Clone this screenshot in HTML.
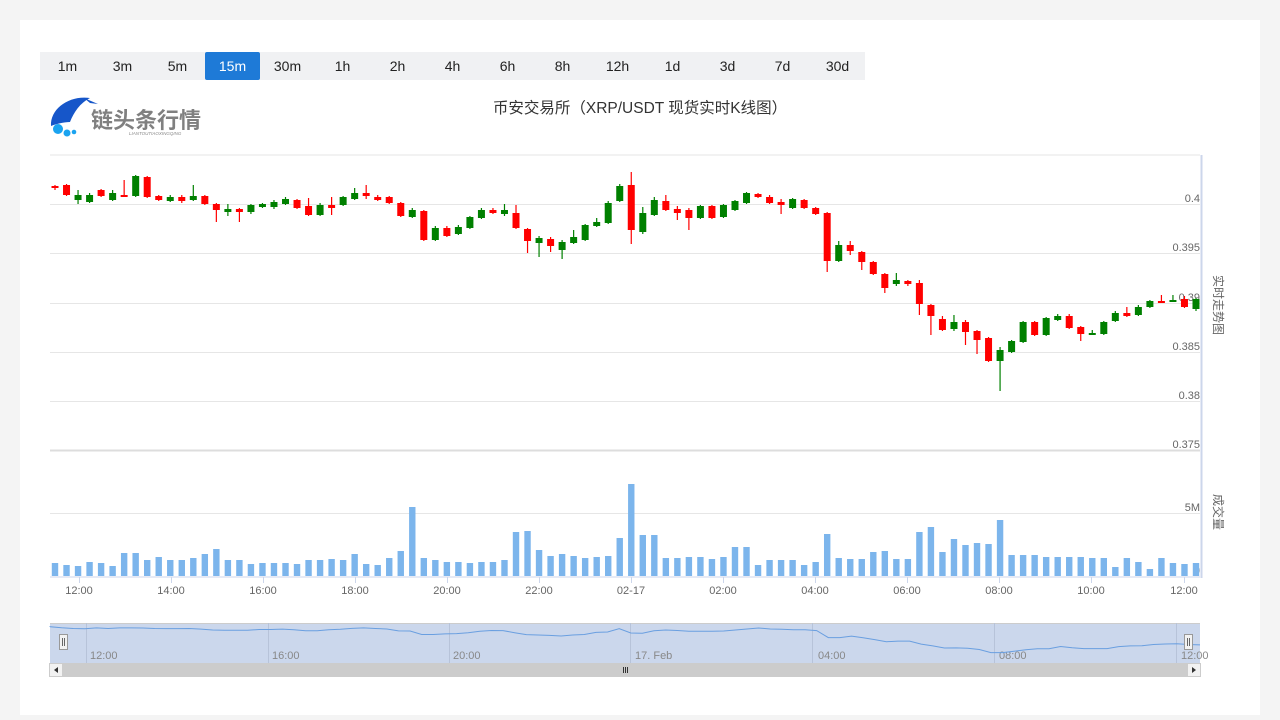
<!DOCTYPE html>
<html><head><meta charset="utf-8"><style>
body{margin:0;background:#f4f4f4;width:1280px;height:720px;overflow:hidden;font-family:"Liberation Sans","Noto Sans CJK SC",sans-serif}
.card{position:absolute;left:20px;top:20px;width:1240px;height:695px;background:#fff}
.tb{position:absolute;left:40px;top:52px;height:28px;display:flex;background:#f0f1f3}
.tb div{width:55px;height:28px;line-height:28px;text-align:center;font-size:14px;color:#222}
.tb .on{background:#1e7ad7;color:#fff;border-radius:2px}
svg{position:absolute;left:0;top:0}
</style></head><body>
<div class="card"></div>
<div class="tb"><div>1m</div><div>3m</div><div>5m</div><div class="on">15m</div><div>30m</div><div>1h</div><div>2h</div><div>4h</div><div>6h</div><div>8h</div><div>12h</div><div>1d</div><div>3d</div><div>7d</div><div>30d</div></div>
<svg id="s" width="1280" height="720" xmlns="http://www.w3.org/2000/svg" font-family="Liberation Sans, Noto Sans CJK SC, sans-serif">
<path d="M51 126 C50 108 70 95 90 98 C80 103 74 112 70 122 C64 122 56 124 51 126Z" fill="#1656c9"/>
<path d="M84 98 L98 104 L90 103Z" fill="#1656c9"/>
<circle cx="58" cy="129" r="5" fill="#1aa3f0"/><circle cx="67" cy="133" r="3.5" fill="#1aa3f0"/><circle cx="74" cy="132" r="2.3" fill="#1aa3f0"/>
<text x="91" y="128" font-size="22" font-weight="bold" fill="#808080">链头条行情</text>
<text x="129" y="135" font-size="4.5" fill="#888" font-style="italic">LIANTOUTIAOXINGQING</text>
<text x="640" y="113" font-size="15.5" fill="#333" text-anchor="middle">币安交易所（XRP/USDT 现货实时K线图）</text>
<g id="g"></g>
</svg>
<script>
var g=document.getElementById('g'),h='';
function L(x1,y1,x2,y2,c,w){h+='<line x1="'+x1+'" y1="'+y1+'" x2="'+x2+'" y2="'+y2+'" stroke="'+c+'" stroke-width="'+(w||1)+'"/>';}
function T(x,y,t,a,c,s){h+='<text x="'+x+'" y="'+y+'" font-size="'+(s||11)+'" fill="'+(c||'#666')+'" text-anchor="'+(a||'middle')+'">'+t+'</text>';}
L(50,155,1200,155,'#e6e6e6');
var gl=[204,253,303,352,401,450],lb=['0.4','0.395','0.39','0.385','0.38','0.375'];
gl.forEach(function(y,i){L(50,y+.5,1200,y+.5,'#e6e6e6');T(1200,y-2,lb[i],'end');});
L(50,450.5,1200,450.5,'#ddd',2);
L(50,513.5,1200,513.5,'#e6e6e6');T(1200,511,'5M','end');T(1200,574,'0','end');
L(1201.5,155,1201.5,578,'#ccd6eb',2);
L(50,577,1200,577,'#ccd6eb');
h+='<text transform="translate(1214,275) rotate(90)" font-size="12" fill="#666">实时走势图</text>';
h+='<text transform="translate(1214,494) rotate(90)" font-size="12" fill="#666">成交量</text>';
var C=[[186,188,185,190,'r'],[185,195,184,196,'r'],[195,200,190,204,'g'],[195,202,193,203,'g'],[190,196,189,197,'r'],[193,200,190,201,'g'],[195,196,180,196,'r'],[176,196,175,197,'g'],[177,197,176,198,'r'],[196,200,195,201,'r'],[197,201,195,202,'g'],[197,201,195,203,'r'],[196,200,185,201,'g'],[196,204,195,205,'r'],[204,210,203,222,'r'],[209,212,204,216,'g'],[209,212,208,222,'r'],[205,212,204,214,'g'],[204,207,203,208,'g'],[202,207,200,209,'g'],[199,204,197,205,'g'],[200,208,199,209,'r'],[206,215,198,216,'r'],[205,215,203,216,'g'],[205,208,197,215,'r'],[197,205,196,206,'g'],[193,199,188,200,'g'],[193,196,185,199,'r'],[197,200,195,201,'r'],[197,203,196,204,'r'],[203,216,202,217,'r'],[210,217,208,218,'g'],[211,240,210,241,'r'],[228,240,226,241,'g'],[228,236,226,237,'r'],[227,234,225,235,'g'],[217,228,216,229,'g'],[210,218,208,219,'g'],[210,213,208,214,'r'],[210,214,204,216,'g'],[213,228,205,229,'r'],[229,241,228,253,'r'],[238,243,236,257,'g'],[239,246,237,252,'r'],[242,250,240,259,'g'],[237,243,230,244,'g'],[225,240,224,241,'g'],[222,226,218,227,'g'],[203,223,201,224,'g'],[186,201,184,202,'g'],[185,230,172,244,'r'],[213,232,207,234,'g'],[200,215,197,216,'g'],[201,210,195,211,'r'],[209,213,206,220,'r'],[210,218,208,230,'r'],[206,218,205,219,'g'],[206,218,205,219,'r'],[205,217,204,218,'g'],[201,210,200,211,'g'],[193,203,192,204,'g'],[194,197,193,198,'r'],[197,203,195,204,'r'],[202,205,199,214,'r'],[199,208,198,209,'g'],[200,208,199,209,'r'],[208,214,207,215,'r'],[213,261,212,272,'r'],[245,261,241,262,'g'],[245,251,241,255,'r'],[252,262,251,270,'r'],[262,274,261,275,'r'],[274,288,273,293,'r'],[280,284,273,286,'g'],[281,284,280,286,'r'],[283,304,280,315,'r'],[305,316,304,335,'r'],[319,330,316,331,'r'],[322,329,315,331,'g'],[322,332,320,345,'r'],[331,340,330,354,'r'],[338,361,337,362,'r'],[350,361,347,391,'g'],[341,352,340,353,'g'],[322,342,321,343,'g'],[322,335,321,336,'r'],[318,335,317,336,'g'],[316,320,314,321,'g'],[316,328,314,329,'r'],[327,334,326,341,'r'],[333,334,330,335,'g'],[322,334,321,335,'g'],[313,321,311,322,'g'],[313,316,307,317,'r'],[307,315,305,316,'g'],[301,307,300,308,'g'],[301,303,295,303,'r'],[300,302,295,302,'g'],[299,307,296,308,'r'],[299,309,298,311,'g']];
var V=[13,11,10,14,13,10,23,23,16,19,16,16,18,22,27,16,16,12,13,13,13,12,16,16,17,16,22,12,11,18,25,69,18,16,14,14,13,14,14,16,44,45,26,20,22,20,18,19,20,38,92,41,41,18,18,19,19,17,19,29,29,11,16,16,16,11,14,42,18,17,17,24,25,17,17,44,49,24,37,31,33,32,56,21,21,21,19,19,19,19,18,18,9,18,14,7,18,13,12,13,19];
var n=C.length,x0=55,dx=(1196-55)/(n-1);
C.forEach(function(c,i){var x=x0+i*dx,col=c[4]=='r'?'#ff0000':'#008000';
L(x,c[2],x,c[3],col,1.2);var t=Math.min(c[0],c[1]),b=Math.max(c[0],c[1]);if(b-t<2)b=t+2;
h+='<rect x="'+(x-3.5)+'" y="'+t+'" width="7" height="'+(b-t)+'" fill="'+col+'"/>';});
for(var i=0;i<n;i++){var x=x0+i*dx,v=V[i]||12;h+='<rect x="'+(x-3.2)+'" y="'+(576-v)+'" width="6.4" height="'+v+'" fill="#7cb5ec"/>';}
var xl=[['12:00',79],['14:00',171],['16:00',263],['18:00',355],['20:00',447],['22:00',539],['02-17',631],['02:00',723],['04:00',815],['06:00',907],['08:00',999],['10:00',1091],['12:00',1184]];
xl.forEach(function(a){L(a[1]+.5,577,a[1]+.5,583,'#ccd6eb');T(a[1],594,a[0]);});
h+='<rect x="50" y="623" width="1150" height="40" fill="#cbd7ec"/>';
L(50,623.5,1200,623.5,'#ccc');
[86,268,449,630,812,994,1176].forEach(function(x){L(x+.5,623,x+.5,663,'#b7c3d9');});
[['12:00',90],['16:00',272],['20:00',453],['17. Feb',635],['04:00',818],['08:00',999],['12:00',1181]].forEach(function(a){T(a[1],659,a[0],'start','#888');});
var p='M50 627';for(var i=0;i<n;i++){var c=C[i];var y=627+(Math.max(c[0],c[1])-190)/200*30;p+=' L'+(50+i*(1150/(n-1))).toFixed(1)+' '+y.toFixed(1);}
h+='<path d="'+p+'" fill="none" stroke="#6a9fe0" stroke-width="1"/>';
h+='<rect x="59.5" y="634.5" width="8" height="15" fill="#f2f2f2" stroke="#999"/>';L(62.5,638,62.5,646,'#666');L(64.5,638,64.5,646,'#666');
h+='<rect x="1184.5" y="634.5" width="8" height="15" fill="#f2f2f2" stroke="#999"/>';L(1187.5,638,1187.5,646,'#666');L(1189.5,638,1189.5,646,'#666');
h+='<rect x="49" y="663" width="1152" height="14" fill="#ccc"/>';
h+='<rect x="49.5" y="663.5" width="13" height="13" fill="#f2f2f2" stroke="#ccc"/><rect x="1187.5" y="663.5" width="13" height="13" fill="#f2f2f2" stroke="#ccc"/>';
h+='<path d="M54 670 L58 667 L58 673Z" fill="#333"/><path d="M1196 670 L1192 667 L1192 673Z" fill="#333"/>';
L(623.5,667,623.5,673,'#333');L(625.5,667,625.5,673,'#333');L(627.5,667,627.5,673,'#333');
g.innerHTML=h;
</script>
</body></html>
